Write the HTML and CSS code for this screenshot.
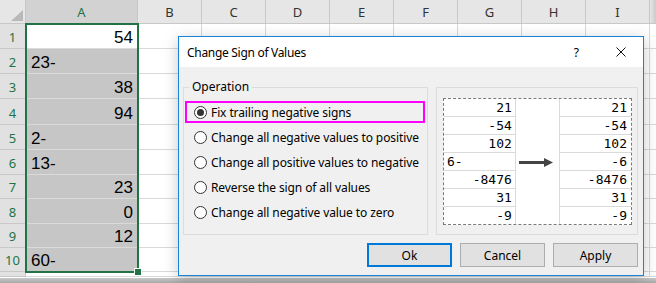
FILE: index.html
```html
<!DOCTYPE html>
<html>
<head>
<meta charset="utf-8">
<link rel="stylesheet" href="styles.css">
</head>
<body>
<div class="screen">
  <div class="sheet">
    <div class="corner"><svg width="12" height="11" viewBox="0 0 12 11"><polygon points="12,0 12,11 0,11" fill="#b9b9b9"/></svg></div>
    <div class="ch sel">A</div><div class="ch">B</div><div class="ch">C</div><div class="ch">D</div><div class="ch">E</div><div class="ch">F</div><div class="ch">G</div><div class="ch">H</div><div class="ch">I</div><div class="ch edge"></div>

    <div class="rh">1</div><div class="c a act r">54</div><div class="c"></div><div class="c"></div><div class="c"></div><div class="c"></div><div class="c"></div><div class="c"></div><div class="c"></div><div class="c"></div><div class="c"></div>
    <div class="rh">2</div><div class="c a">23-</div><div class="c"></div><div class="c"></div><div class="c"></div><div class="c"></div><div class="c"></div><div class="c"></div><div class="c"></div><div class="c"></div><div class="c"></div>
    <div class="rh">3</div><div class="c a r">38</div><div class="c"></div><div class="c"></div><div class="c"></div><div class="c"></div><div class="c"></div><div class="c"></div><div class="c"></div><div class="c"></div><div class="c"></div>
    <div class="rh">4</div><div class="c a r">94</div><div class="c"></div><div class="c"></div><div class="c"></div><div class="c"></div><div class="c"></div><div class="c"></div><div class="c"></div><div class="c"></div><div class="c"></div>
    <div class="rh">5</div><div class="c a">2-</div><div class="c"></div><div class="c"></div><div class="c"></div><div class="c"></div><div class="c"></div><div class="c"></div><div class="c"></div><div class="c"></div><div class="c"></div>
    <div class="rh">6</div><div class="c a">13-</div><div class="c"></div><div class="c"></div><div class="c"></div><div class="c"></div><div class="c"></div><div class="c"></div><div class="c"></div><div class="c"></div><div class="c"></div>
    <div class="rh">7</div><div class="c a r">23</div><div class="c"></div><div class="c"></div><div class="c"></div><div class="c"></div><div class="c"></div><div class="c"></div><div class="c"></div><div class="c"></div><div class="c"></div>
    <div class="rh">8</div><div class="c a r">0</div><div class="c"></div><div class="c"></div><div class="c"></div><div class="c"></div><div class="c"></div><div class="c"></div><div class="c"></div><div class="c"></div><div class="c"></div>
    <div class="rh">9</div><div class="c a r">12</div><div class="c"></div><div class="c"></div><div class="c"></div><div class="c"></div><div class="c"></div><div class="c"></div><div class="c"></div><div class="c"></div><div class="c"></div>
    <div class="rh">10</div><div class="c a">60-</div><div class="c"></div><div class="c"></div><div class="c"></div><div class="c"></div><div class="c"></div><div class="c"></div><div class="c"></div><div class="c"></div><div class="c"></div>
    <div class="rh"></div><div class="c"></div><div class="c"></div><div class="c"></div><div class="c"></div><div class="c"></div><div class="c"></div><div class="c"></div><div class="c"></div><div class="c"></div><div class="c"></div>

    <div class="selbox"><span class="handle"></span></div>
  </div>
  <div class="bottombar"></div>

  <div class="dialog">
    <div class="titlebar">
      <span class="title">Change Sign of Values</span>
      <span class="help">?</span>
      <svg class="close" width="10" height="10" viewBox="0 0 10 10"><path d="M0.5 0.5 L9.5 9.5 M9.5 0.5 L0.5 9.5" stroke="#111" stroke-width="1" fill="none"/></svg>
    </div>
    <div class="dbody">
      <div class="groups">
        <fieldset class="ops">
          <legend>Operation</legend>
          <div class="opt hl"><span class="rb on"></span>Fix trailing negative signs</div>
          <div class="opt"><span class="rb"></span>Change all negative values to positive</div>
          <div class="opt"><span class="rb"></span>Change all positive values to negative</div>
          <div class="opt"><span class="rb"></span>Reverse the sign of all values</div>
          <div class="opt"><span class="rb"></span>Change all negative value to zero</div>
        </fieldset>
        <div class="preview">
          <div class="tbl">
            <div class="col">
              <div class="v">21</div>
              <div class="v">-54</div>
              <div class="v">102</div>
              <div class="v l">6-</div>
              <div class="v">-8476</div>
              <div class="v">31</div>
              <div class="v">-9</div>
            </div>
            <div class="mid">
              <svg class="arrow" width="34" height="9" viewBox="0 0 34 9"><rect x="0" y="3" width="27" height="3" fill="#444"/><polygon points="25,0 34,4.5 25,9" fill="#444"/></svg>
            </div>
            <div class="col rcol">
              <div class="v">21</div>
              <div class="v">-54</div>
              <div class="v">102</div>
              <div class="v">-6</div>
              <div class="v">-8476</div>
              <div class="v">31</div>
              <div class="v">-9</div>
            </div>
          </div>
        </div>
      </div>
      <div class="btns">
        <div class="btn def">Ok</div>
        <div class="btn">Cancel</div>
        <div class="btn">Apply</div>
      </div>
    </div>
  </div>
</div>
</body>
</html>
```
FILE: styles.css
```css
html, body {
  margin: 0;
  padding: 0;
  background: #fff;
}
.screen {
  position: relative;
  width: 656px;
  height: 283px;
  overflow: hidden;
  background: #fff;
}
.sheet {
  position: relative;
  display: grid;
  grid-template-columns: 26px 112px repeat(8, 64px) 1fr;
  grid-template-rows: 24px 25px 25px 25px 26px 25px 25px 24px 25px 24px 24px 5px;
  height: 278px;
}
.corner {
  background: #e6e6e6;
  border-right: 1px solid #c8c8c8;
  border-bottom: 1px solid #c8c8c8;
  display: flex;
  align-items: flex-end;
  justify-content: flex-end;
  padding: 0 2px 2px 0;
}
.ch {
  background: #e6e6e6;
  border-right: 1px solid #c8c8c8;
  border-bottom: 1px solid #c8c8c8;
  font-family: "Noto Sans", sans-serif;
  font-size: 13px;
  color: #333;
  text-align: center;
  line-height: 21px;
  padding-top: 2px;
}
.ch.sel {
  background: #d2d2d2;
  color: #217346;
}
.ch.edge {
  border-right: none;
  background: linear-gradient(to right, #e6e6e6, #b8b8b8);
}
.rh {
  background: #e1e1e1;
  border-right: 1px solid #c8c8c8;
  border-bottom: 1px solid #c8c8c8;
  font-family: "Noto Sans", sans-serif;
  font-size: 13px;
  color: #217346;
  text-align: center;
  display: flex;
  align-items: flex-end;
  justify-content: center;
  line-height: 18px;
  padding-bottom: 2px;
}
.c {
  border-right: 1px solid #d9d9d9;
  border-bottom: 1px solid #d9d9d9;
  font-family: "Liberation Sans", Arial, sans-serif;
  font-size: 17px;
  color: #000;
  line-height: 20px;
  display: flex;
  align-items: flex-end;
  padding: 0 4px 0 5px;
  white-space: nowrap;
}
.c.a {
  background: #c6c6c6;
  border-bottom-color: #dadada;
}
.c.act {
  background: #fff;
}
.c.r {
  justify-content: flex-end;
}
.selbox {
  position: absolute;
  left: 25px;
  top: 23px;
  width: 114px;
  height: 250px;
  box-sizing: border-box;
  border: 2px solid #217346;
  pointer-events: none;
}
.handle {
  position: absolute;
  right: -5px;
  bottom: -5px;
  width: 6px;
  height: 6px;
  background: #217346;
  border: 1px solid #fff;
}
.bottombar {
  height: 5px;
  background: linear-gradient(to bottom, #c8c8c8, #a8a8a8);
}

/* Dialog */
.dialog {
  position: absolute;
  left: 178px;
  top: 36px;
  width: 466px;
  height: 240px;
  box-sizing: border-box;
  border: 1px solid #1883d7;
  background: #f0f0f0;
  box-shadow: 0 3px 14px rgba(0, 0, 0, 0.22);
  display: flex;
  flex-direction: column;
  font-family: "Noto Sans", sans-serif;
  font-size: 12px;
  color: #000;
}
.titlebar {
  height: 30px;
  background: #fff;
  display: flex;
  align-items: center;
  padding-left: 8px;
}
.title {
  flex: 1;
  letter-spacing: -0.3px;
}
.help {
  font-size: 12px;
  margin-right: 37px;
}
.close {
  margin-right: 17px;
}
.dbody {
  flex: 1;
  padding: 12px 5px 0 4px;
  display: flex;
  flex-direction: column;
}
.groups {
  display: flex;
  gap: 8px;
  height: 156px;
}
.ops {
  margin: 0;
  width: 245px;
  box-sizing: border-box;
  border: 1px solid #dcdcdc;
  padding: 6px 2px 0 1px;
  min-width: 0;
}
.ops legend {
  padding: 0 3px;
  margin-left: 4px;
  line-height: 16px;
}
.opt {
  height: 22px;
  box-sizing: border-box;
  border: 2px solid transparent;
  display: flex;
  align-items: center;
  padding-left: 7px;
  margin-bottom: 3px;
  white-space: nowrap;
  letter-spacing: -0.1px;
}
.opt.hl {
  border-color: #ff00ff;
}
.rb {
  width: 13px;
  height: 13px;
  box-sizing: border-box;
  border: 1px solid #333;
  border-radius: 50%;
  background: #fff;
  margin-right: 4px;
  display: flex;
  align-items: center;
  justify-content: center;
  flex: none;
}
.rb.on::after {
  content: "";
  width: 7px;
  height: 7px;
  border-radius: 50%;
  background: #333;
}
.preview {
  margin-top: 8px;
  width: 202px;
  box-sizing: border-box;
  border: 1px solid #dcdcdc;
  padding: 10px 5px 9px 6px;
}
.tbl {
  display: flex;
  border: 1px dashed #7a7a7a;
  background: #fff;
  height: 127px;
  box-sizing: border-box;
}
.col {
  width: 72px;
  display: flex;
  flex-direction: column;
}
.v {
  height: 18px;
  box-sizing: border-box;
  border-bottom: 1px solid #dadada;
  font-family: "DejaVu Sans Mono", "Liberation Mono", monospace;
  font-size: 13px;
  line-height: 17px;
  text-align: right;
  padding: 0 3px;
}
.v:last-child {
  border-bottom: none;
}
.v.l {
  text-align: left;
}
.rcol .v {
  padding-right: 4px;
}
.mid {
  width: 41px;
  border-left: 1px solid #dadada;
  border-right: 1px solid #dadada;
  padding-top: 59px;
  padding-left: 3px;
}
.arrow {
  display: block;
}
.btns {
  display: flex;
  justify-content: flex-end;
  gap: 8px;
  margin-top: 8px;
}
.btn {
  width: 85px;
  height: 24px;
  box-sizing: border-box;
  border: 1px solid #adadad;
  background: #e1e1e1;
  display: flex;
  align-items: center;
  justify-content: center;
}
.btn.def {
  border: 2px solid #0078d7;
}
```
